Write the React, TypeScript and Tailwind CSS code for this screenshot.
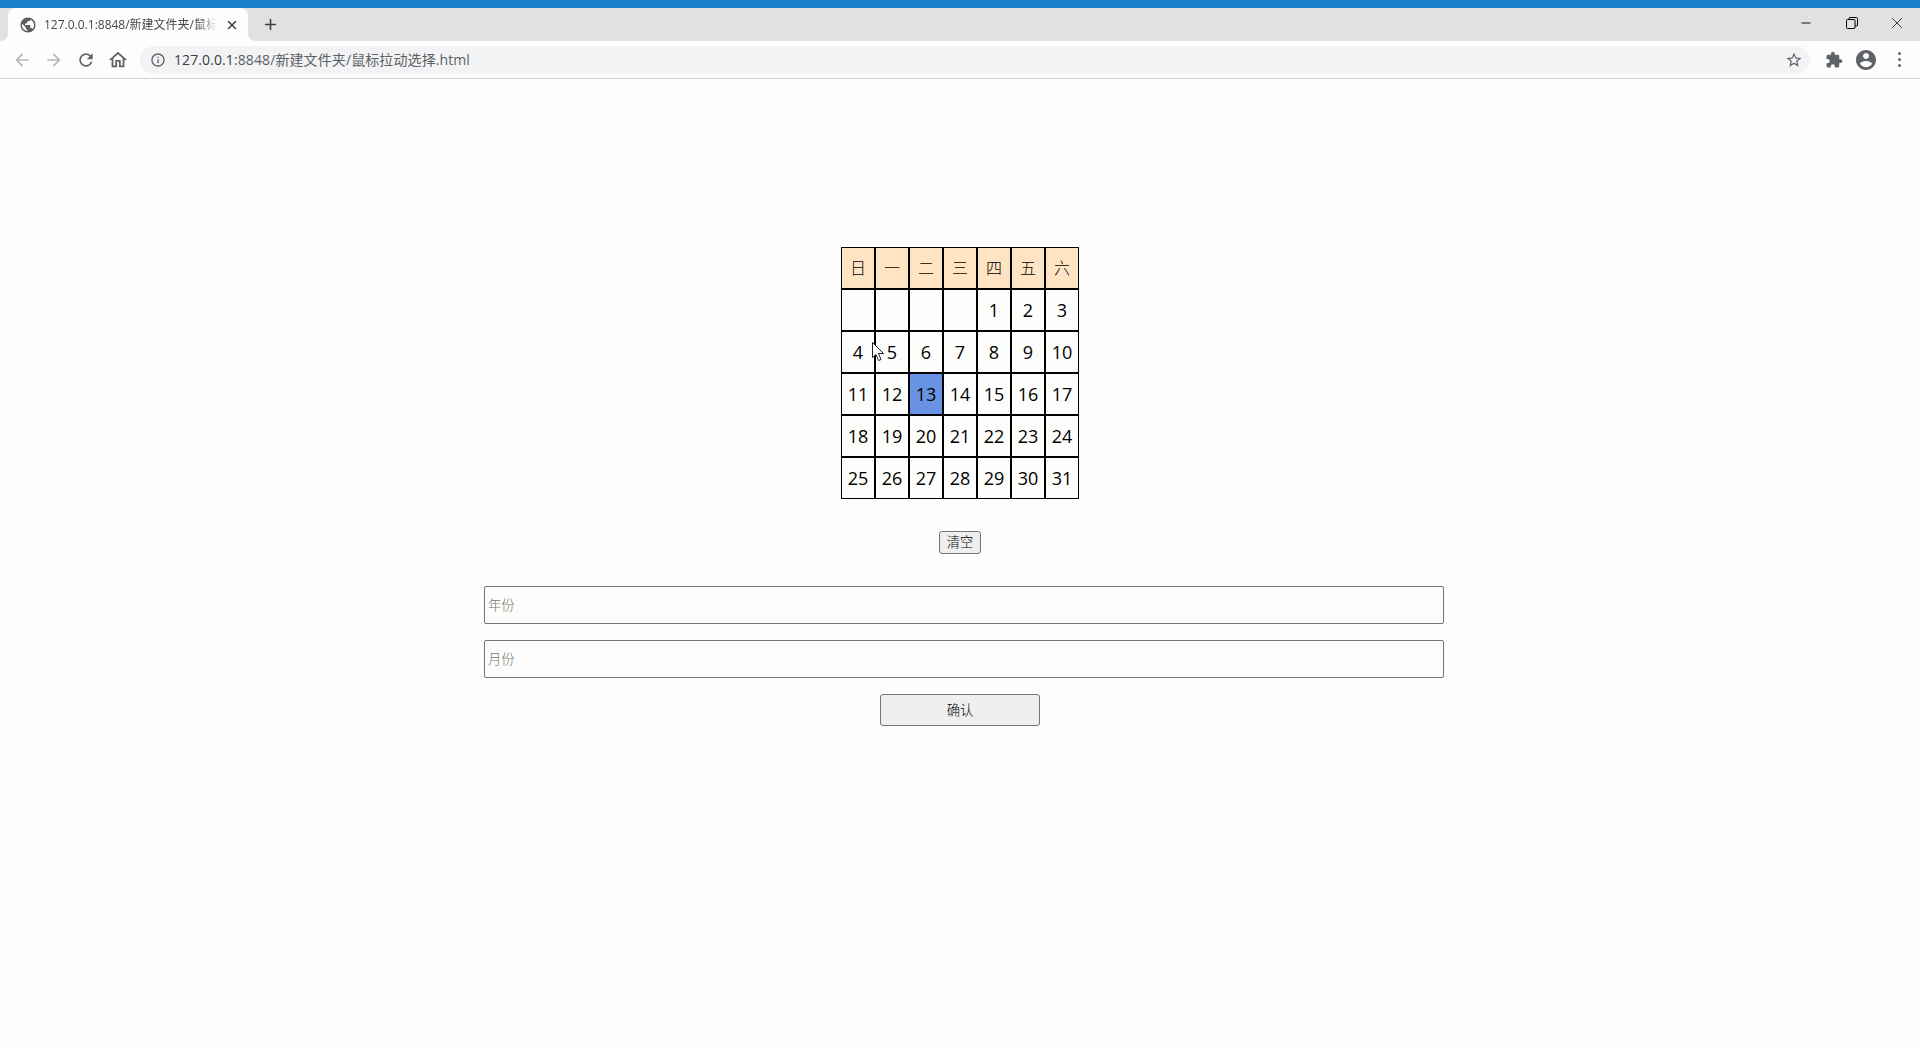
import { Minus, Plus, X } from "lucide-react";

const weekdays = ["日", "一", "二", "三", "四", "五", "六"];
const days: (number | null)[][] = [
  [null, null, null, null, 1, 2, 3],
  [4, 5, 6, 7, 8, 9, 10],
  [11, 12, 13, 14, 15, 16, 17],
  [18, 19, 20, 21, 22, 23, 24],
  [25, 26, 27, 28, 29, 30, 31],
];

const pageUrl = "127.0.0.1:8848/新建文件夹/鼠标拉动选择.html";

function Glyph({ d, className }: { d: string; className: string }) {
  return (
    <svg viewBox="0 0 24 24" fill="currentColor" className={className}>
      <path d={d} />
    </svg>
  );
}

function BrowserChrome() {
  return (
    <header className="font-['Open_Sans','Noto_Sans_CJK_SC',sans-serif]">
      <div className="h-2 bg-[#1a80c9]" />

      {/* tab strip */}
      <div className="flex h-[33px] items-end bg-[#dfe1e3] pl-2">
        <div className="relative flex h-[33px] w-[240px] items-center rounded-t-lg bg-[#fdfdfd] pl-[11px] pr-[9px]">
          <svg viewBox="0 0 8 8" className="absolute bottom-0 left-[-8px] h-2 w-2">
            <path d="M8 0V8H0C5 8 8 5 8 0Z" fill="#fdfdfd" />
          </svg>
          <svg viewBox="0 0 8 8" className="absolute bottom-0 right-[-8px] h-2 w-2">
            <path d="M0 0V8H8C3 8 0 5 0 0Z" fill="#fdfdfd" />
          </svg>
          <Glyph
            className="h-[18px] w-[18px] shrink-0 text-[#5a5c60]"
            d="M12 2C6.48 2 2 6.48 2 12s4.48 10 10 10 10-4.48 10-10S17.52 2 12 2zm-1 17.93c-3.95-.49-7-3.85-7-7.93 0-.62.08-1.21.21-1.79L9 15v1c0 1.1.9 2 2 2v1.93zm6.9-2.54c-.26-.81-1-1.39-1.9-1.39h-1v-3c0-.55-.45-1-1-1H8v-2h2c.55 0 1-.45 1-1V7h2c1.1 0 2-.9 2-2v-.41c2.93 1.19 5 4.06 5 7.41 0 2.08-.8 3.97-2.1 5.39z"
          />
          <span className="ml-[7px] w-[174px] overflow-hidden whitespace-nowrap text-[12px] text-[#45484c] [mask-image:linear-gradient(to_right,black_88%,transparent)]">
            {pageUrl}
          </span>
          <X className="ml-auto h-[14px] w-[14px] text-[#3c4043]" strokeWidth={2.5} />
        </div>
        <Plus className="mb-[8px] ml-[14px] h-[17px] w-[17px] text-[#3c4043]" strokeWidth={2.2} />
        <div className="mb-[9px] ml-auto flex items-center pr-[14px] text-black">
          <Minus className="h-[14px] w-[14px]" strokeWidth={1.6} />
          <svg
            viewBox="0 0 12 12"
            className="ml-[33px] h-[12px] w-[12px]"
            fill="none"
            stroke="currentColor"
          >
            <rect x="0.5" y="2.5" width="8.5" height="9" rx="1" />
            <path d="M3 2.5V1.5a1 1 0 0 1 1-1h6.5a1 1 0 0 1 1 1V8a1 1 0 0 1-1 1H9" />
          </svg>
          <X className="ml-[30px] h-[18px] w-[18px]" strokeWidth={1} />
        </div>
      </div>

      {/* toolbar */}
      <div className="flex h-[38px] items-center border-b border-[#d0d2d4] bg-[#fdfdfd] pl-[12px] pr-[13px]">
        <Glyph
          className="h-[20px] w-[20px] text-[#b4b7bb]"
          d="M20 11H7.83l5.59-5.59L12 4l-8 8 8 8 1.41-1.41L7.83 13H20v-2z"
        />
        <Glyph
          className="ml-[12px] h-[20px] w-[20px] text-[#b4b7bb]"
          d="M12 4l-1.41 1.41L16.17 11H4v2h12.17l-5.58 5.59L12 20l8-8z"
        />
        <Glyph
          className="ml-[12px] h-[20px] w-[20px] text-[#5f6368]"
          d="M17.65 6.35C16.2 4.9 14.21 4 12 4c-4.42 0-7.99 3.58-7.99 8s3.57 8 7.99 8c3.73 0 6.84-2.55 7.73-6h-2.08c-.82 2.33-3.04 4-5.65 4-3.31 0-6-2.69-6-6s2.69-6 6-6c1.66 0 3.14.69 4.22 1.78L13 11h7V4l-2.35 2.35z"
        />
        <Glyph
          className="ml-[11px] h-[22px] w-[22px] text-[#5f6368]"
          d="M12 5.69l5 4.5V18h-2v-6H9v6H7v-7.81l5-4.5M12 3L2 12h3v8h6v-6h2v6h6v-8h3L12 3z"
        />
        <div className="ml-[11px] flex h-[28px] w-[1670px] items-center rounded-full bg-[#f2f3f4] pl-[10px] pr-[7px]">
          <Glyph
            className="h-[16px] w-[16px] text-[#5f6368]"
            d="M11 7h2v2h-2zm0 4h2v6h-2zm1-9C6.48 2 2 6.48 2 12s4.48 10 10 10 10-4.48 10-10S17.52 2 12 2zm0 18c-4.41 0-8-3.59-8-8s3.59-8 8-8 8 3.59 8 8-3.59 8-8 8z"
          />
          <span className="ml-[8px] text-[14px] tracking-[0.1px] text-[#5d6064]">
            <span className="text-[#3a3c40]">127.0.0.1</span>:8848/新建文件夹/鼠标拉动选择.html
          </span>
          <Glyph
            className="ml-auto h-[18px] w-[18px] text-[#5f6368]"
            d="M22 9.24l-7.19-.62L12 2 9.19 8.63 2 9.24l5.46 4.73L5.82 21 12 17.27 18.18 21l-1.63-7.03L22 9.24zM12 15.4l-3.76 2.27 1-4.28-3.32-2.88 4.38-.38L12 6.1l1.71 4.04 4.38.38-3.32 2.88 1 4.28L12 15.4z"
          />
        </div>
        <Glyph
          className="ml-[15px] h-[18px] w-[18px] text-[#5f6368]"
          d="M20.5 11H19V7c0-1.1-.9-2-2-2h-4V3.5C13 2.12 11.88 1 10.5 1S8 2.12 8 3.5V5H4c-1.1 0-1.99.9-1.99 2v3.8H3.5c1.49 0 2.7 1.21 2.7 2.7s-1.21 2.7-2.7 2.7H2V20c0 1.1.9 2 2 2h3.8v-1.5c0-1.49 1.21-2.7 2.7-2.7 1.49 0 2.7 1.21 2.7 2.7V22H17c1.1 0 2-.9 2-2v-4h1.5c1.38 0 2.5-1.12 2.5-2.5S21.88 11 20.5 11z"
        />
        <Glyph
          className="ml-[11px] h-[24px] w-[24px] text-[#5f6368]"
          d="M12 2C6.48 2 2 6.48 2 12s4.48 10 10 10 10-4.48 10-10S17.52 2 12 2zm0 3c1.66 0 3 1.34 3 3s-1.34 3-3 3-3-1.34-3-3 1.34-3 3-3zm0 14.2c-2.5 0-4.71-1.28-6-3.22.03-1.99 4-3.08 6-3.08 1.99 0 5.97 1.09 6 3.08-1.29 1.94-3.5 3.22-6 3.22z"
        />
        <div className="ml-[20px] flex flex-col gap-[3px]">
          <span className="h-[3px] w-[3px] rounded-full bg-[#5f6368]" />
          <span className="h-[3px] w-[3px] rounded-full bg-[#5f6368]" />
          <span className="h-[3px] w-[3px] rounded-full bg-[#5f6368]" />
        </div>
      </div>
    </header>
  );
}

function Calendar() {
  return (
    <div className="relative">
      <table className="border-separate border-spacing-0 text-[18px] font-[380] text-black">
        <thead>
          <tr>
            {weekdays.map((d) => (
              <th
                key={d}
                className="h-[42px] w-[34px] border border-black bg-[#ffe4c4] p-0 text-center text-[16px] font-light"
              >
                {d}
              </th>
            ))}
          </tr>
        </thead>
        <tbody>
          {days.map((week, i) => (
            <tr key={i}>
              {week.map((day, j) => (
                <td
                  key={j}
                  className={
                    day === 13
                      ? "h-[42px] w-[34px] border border-black bg-[#6892e4] p-0 text-center"
                      : "h-[42px] w-[34px] border border-black p-0 text-center"
                  }
                >
                  {day}
                </td>
              ))}
            </tr>
          ))}
        </tbody>
      </table>
      {/* mouse pointer caught in the capture */}
      <svg viewBox="0 0 12 19" className="absolute left-[31px] top-[95px] h-[19px] w-[12px]">
        <path
          d="M0.5 0.5V15.5L4 12.5L6.5 18.5L9 17.5L6.5 11.5H11.5Z"
          fill="#fff"
          stroke="#222"
          strokeWidth="1"
        />
      </svg>
    </div>
  );
}

export default function App() {
  return (
    <div className="min-h-[1048px] bg-[#fdfdfb] font-['Open_Sans','Noto_Sans_CJK_SC',sans-serif]">
      <BrowserChrome />
      <main className="flex flex-col items-center pt-[168px]">
        <Calendar />
        <button className="mt-[32px] h-[23px] w-[42px] rounded-[3px] border border-[#767676] bg-[#efefef] text-[13.33px] leading-none font-light text-black">
          清空
        </button>
        <input
          className="ml-[8px] mt-[32px] h-[38px] w-[960px] rounded-[2px] border border-[#767676] px-[3px] text-[13.33px] font-light placeholder:text-[#757575]"
          placeholder="年份"
        />
        <input
          className="ml-[8px] mt-[16px] h-[38px] w-[960px] rounded-[2px] border border-[#767676] px-[3px] text-[13.33px] font-light placeholder:text-[#757575]"
          placeholder="月份"
        />
        <button className="mt-[16px] h-[32px] w-[160px] rounded-[3px] border border-[#767676] bg-[#efefef] pt-[1px] text-[13.33px] leading-none font-light text-black">
          确认
        </button>
      </main>
    </div>
  );
}
